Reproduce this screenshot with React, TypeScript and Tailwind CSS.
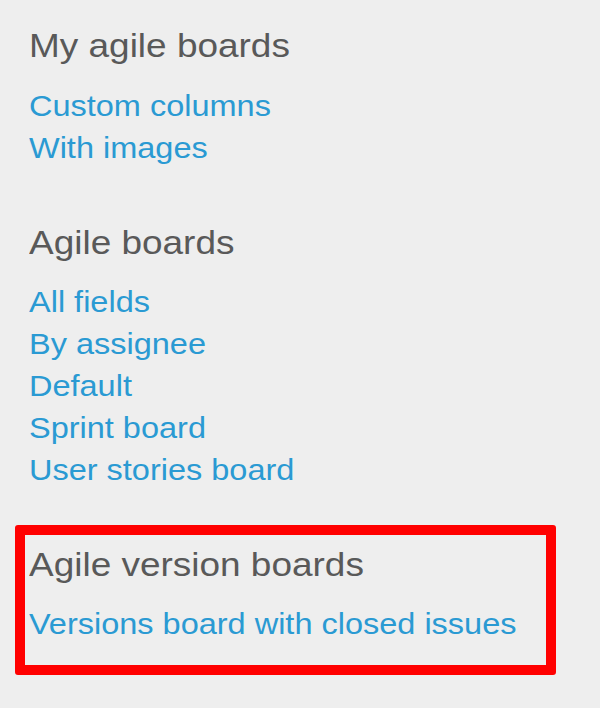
import React from "react";

const Heading = ({ children }: { children: React.ReactNode }) => (
  <h3 className="h-[40px] leading-[40px] text-[33px] font-normal text-[#595959] whitespace-nowrap">
    <span className="inline-block origin-left scale-x-[1.12]">{children}</span>
  </h3>
);

const Link = ({ children }: { children: React.ReactNode }) => (
  <li className="h-[42px] leading-[42px] text-[29px] whitespace-nowrap">
    <a href="#" className="inline-block origin-left scale-x-[1.12] text-[#2a9ad3]">
      {children}
    </a>
  </li>
);

export default function App() {
  return (
    <div
      className="relative w-[600px] h-[708px] bg-[#eeeeee] overflow-hidden pl-[29px] pt-[26px]"
      style={{ fontFamily: '"Liberation Sans", Arial, sans-serif' }}
    >
      <section>
        <Heading>My agile boards</Heading>
        <ul className="mt-[19px]">
          <Link>Custom columns</Link>
          <Link>With images</Link>
        </ul>
      </section>
      <section className="mt-[54px]">
        <Heading>Agile boards</Heading>
        <ul className="mt-[18px]">
          <Link>All fields</Link>
          <Link>By assignee</Link>
          <Link>Default</Link>
          <Link>Sprint board</Link>
          <Link>User stories board</Link>
        </ul>
      </section>
      <section className="mt-[54px]">
        <Heading>Agile version boards</Heading>
        <ul className="mt-[18px]">
          <Link>Versions board with closed issues</Link>
        </ul>
      </section>
      <div className="absolute left-[15px] top-[525px] w-[541px] h-[150px] border-[10px] border-[#ff0000] rounded-[3px]" />
    </div>
  );
}
